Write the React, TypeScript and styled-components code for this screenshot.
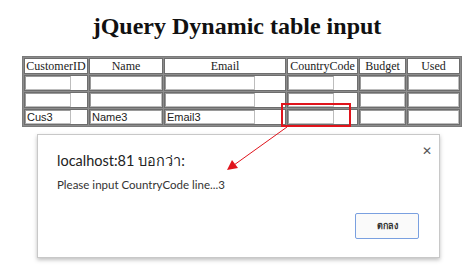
import React from 'react';
import styled, { createGlobalStyle } from 'styled-components';

const GlobalStyle = createGlobalStyle`
  html, body {
    margin: 0;
    padding: 0;
    background: #ffffff;
  }
  body {
    width: 474px;
    height: 276px;
    overflow: hidden;
    font-family: "Liberation Serif", "Times New Roman", serif;
  }
`;

const Page = styled.div`
  position: relative;
  width: 474px;
  height: 276px;
`;

const Title = styled.h1`
  margin: 0;
  padding-top: 11px;
  height: 56px;
  box-sizing: border-box;
  text-align: center;
  font-family: "Liberation Serif", serif;
  font-weight: bold;
  font-size: 24px;
  line-height: 30px;
  color: #111;
`;

const Table = styled.table`
  margin-left: 22px;
  width: 439px;
  table-layout: fixed;
  border-collapse: separate;
  border-spacing: 1px;
  border: 1px solid #7a7a7a;
  background: #8c8c8c;
`;

const HeadCell = styled.th`
  height: 14px;
  padding: 0;
  background: #fff;
  border: 1px solid #6d6d6d;
  font-family: "Liberation Serif", serif;
  font-weight: normal;
  font-size: 12px;
  line-height: 14px;
  color: #222;
  text-align: center;
  white-space: nowrap;
  overflow: hidden;
`;

const Cell = styled.td`
  height: 14px;
  padding: 0;
  background: #fff;
  border: 1px solid #6d6d6d;
  text-align: left;
`;

const Field = styled.input<{ $w?: number }>`
  display: block;
  box-sizing: border-box;
  width: ${(p) => (p.$w ? `${p.$w}px` : '100%')};
  height: 14px;
  margin: 0;
  padding: 0 1px;
  border: 1px solid #bdbdbd;
  border-top-color: #9a9a9a;
  border-left-color: #9a9a9a;
  font-family: "Liberation Sans", Arial, sans-serif;
  font-size: 11px;
  color: #222;
  background: #fff;
  outline: none;
`;

const Dialog = styled.div`
  margin: 7px 0 0 37px;
  width: 403px;
  height: 124px;
  box-sizing: border-box;
  border: 1px solid #c8c8c8;
  background: #fff;
  box-shadow: 0 2px 4px rgba(0, 0, 0, 0.25);
  display: flex;
  flex-direction: column;
  padding: 14px 20px 18px 19px;
  font-family: Lato, "Open Sans", "DejaVu Sans", sans-serif;
  color: #333;
`;

const DialogHead = styled.div`
  display: flex;
  justify-content: space-between;
  align-items: flex-start;
`;

const DialogTitle = styled.div`
  font-size: 14.5px;
  line-height: 20px;
  margin-top: 2px;
  color: #222;
`;

const Close = styled.span`
  font-family: "DejaVu Sans", sans-serif;
  font-size: 12px;
  line-height: 12px;
  font-weight: bold;
  color: #555;
  margin: -4px -13px 0 0;
`;

const Message = styled.div`
  margin-top: 7px;
  font-size: 11.5px;
  line-height: 14px;
  color: #333;
`;

const Actions = styled.div`
  margin-top: auto;
  display: flex;
  justify-content: flex-end;
`;

const OkButton = styled.button`
  width: 64px;
  height: 26px;
  box-sizing: border-box;
  border: 1px solid #7aa0e0;
  border-radius: 2px;
  background: #fafafa;
  font-family: "Noto Sans", "DejaVu Sans", sans-serif;
  font-weight: bold;
  font-size: 9px;
  color: #333;
  padding: 0;
`;

const Annotation = styled.svg`
  position: absolute;
  left: 0;
  top: 0;
  pointer-events: none;
`;

type Col = { title: string; width: number; input?: number };

const columns: Col[] = [
  { title: 'CustomerID', width: 64, input: 46 },
  { title: 'Name', width: 74 },
  { title: 'Email', width: 122, input: 90 },
  { title: 'CountryCode', width: 71, input: 46 },
  { title: 'Budget', width: 47 },
  { title: 'Used', width: 53 },
];

const rows: string[][] = [
  ['', '', '', '', '', ''],
  ['', '', '', '', '', ''],
  ['Cus3', 'Name3', 'Email3', '', '', ''],
];

export default function App() {
  return (
    <Page>
      <GlobalStyle />
      <Title>jQuery Dynamic table input</Title>
      <Table>
        <colgroup>
          {columns.map((c) => (
            <col key={c.title} style={{ width: c.width }} />
          ))}
        </colgroup>
        <thead>
          <tr>
            {columns.map((c) => (
              <HeadCell key={c.title}>{c.title}</HeadCell>
            ))}
          </tr>
        </thead>
        <tbody>
          {rows.map((row, i) => (
            <tr key={i}>
              {row.map((v, j) => (
                <Cell key={j}>
                  <Field $w={columns[j].input} defaultValue={v} readOnly />
                </Cell>
              ))}
            </tr>
          ))}
        </tbody>
      </Table>

      <Dialog>
        <DialogHead>
          <DialogTitle>localhost:81 บอกว่า:</DialogTitle>
          <Close>✕</Close>
        </DialogHead>
        <Message>Please input CountryCode line...3</Message>
        <Actions>
          <OkButton>ตกลง</OkButton>
        </Actions>
      </Dialog>

      <Annotation width="474" height="276" viewBox="0 0 474 276">
        <rect x="282" y="104" width="68" height="22" fill="none" stroke="#e0141c" strokeWidth="2" />
        <line x1="287" y1="127" x2="234" y2="165" stroke="#e0141c" strokeWidth="1" />
        <polygon points="227,170 232,160 238,168" fill="#e0141c" />
      </Annotation>
    </Page>
  );
}
